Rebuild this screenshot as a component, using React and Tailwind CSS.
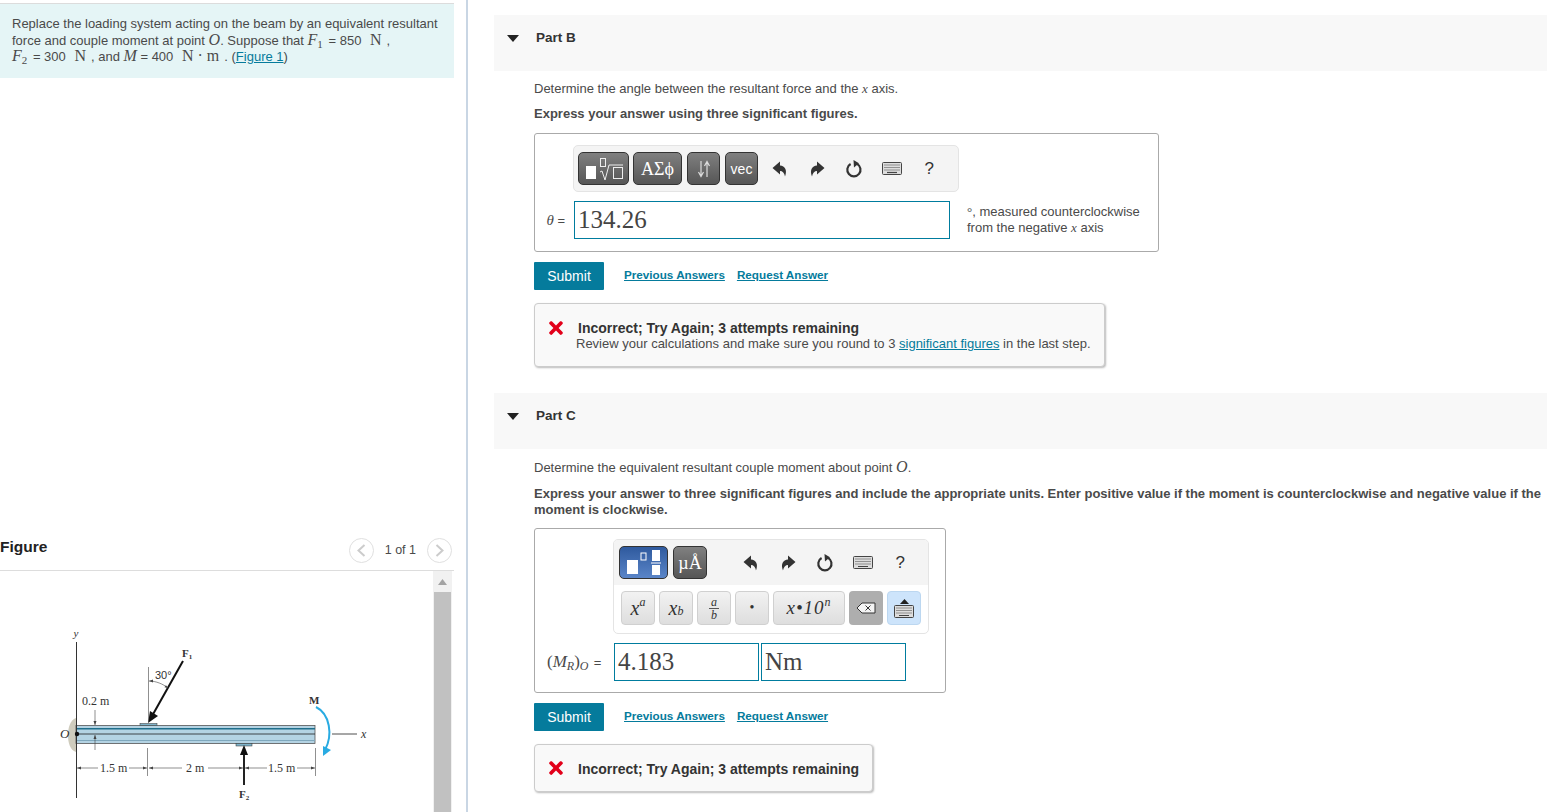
import { FaTimes } from 'react-icons/fa';

const Var = ({ children }) => <i className="font-['Liberation_Serif',serif] text-[16px] leading-none">{children}</i>;
const Unit = ({ children }) => <span className="font-['Liberation_Serif',serif] text-[16px] leading-none mx-[5px]">{children}</span>;
const Sub = ({ children }) => <sub className="font-['Liberation_Serif',serif] text-[11px] leading-none not-italic mr-[2px]">{children}</sub>;

const Undo = ({ flip }) => (
  <svg width="16" height="16" viewBox="0 0 16 16" className={flip ? 'scale-x-[-1]' : ''}>
    <path d="M0.5 7 L8 0.5 V4.5 C13 4.8 15.5 9 13 15.5 C12.5 12 10.5 10 8 10 V13.5 Z" fill="#333" />
  </svg>
);

const Refresh = () => (
  <svg width="18" height="18" viewBox="0 0 18 18">
    <path d="M12 3.9 A6.6 6.6 0 1 1 5.6 4" fill="none" stroke="#333" strokeWidth="2.2" />
    <path d="M8.5 0 L9 7.5 L14 3.2 Z" fill="#333" />
  </svg>
);

const Keyboard = () => (
  <svg width="20" height="13" viewBox="0 0 20 13">
    <rect x="0.5" y="0.5" width="19" height="12" rx="1" fill="#ddd" stroke="#444" />
    <path d="M2.5 3h15M2.5 5.5h15M2.5 8h15" stroke="#444" strokeWidth="1.2" strokeDasharray="1 1" />
    <path d="M5 10.5h10" stroke="#444" strokeWidth="1.2" />
  </svg>
);

const IconSlots = () => (
  <>
    <span className="w-[37.4px] flex justify-center"><Undo /></span>
    <span className="w-[37.4px] flex justify-center"><Undo flip /></span>
    <span className="w-[37.4px] flex justify-center"><Refresh /></span>
    <span className="w-[37.4px] flex justify-center"><Keyboard /></span>
    <span className="w-[37.4px] flex justify-center text-[17px] text-[#333]">?</span>
  </>
);

const DarkBtn = ({ className, children }) => (
  <div className={`h-[33px] flex items-center justify-center rounded-[5px] border border-[#333] bg-gradient-to-b from-[#808080] to-[#565656] text-white ${className}`}>
    {children}
  </div>
);

const KeyBtn = ({ className, children }) => (
  <div className={`h-[34px] flex items-center justify-center rounded-[4px] border border-[#d0d0d0] bg-gradient-to-b from-[#f2f2f2] to-[#dedede] font-['Liberation_Serif',serif] italic text-[#333] ${className}`}>
    {children}
  </div>
);

const AnswerInput = ({ className, children }) => (
  <div className={`h-[38px] border border-[#007c9e] pl-[3px] flex items-center font-['Liberation_Serif',serif] text-[25px] text-[#444] ${className}`}>
    {children}
  </div>
);

const PartHeader = ({ title, className }) => (
  <div className={`h-[56px] bg-[#f8f8f8] flex items-start pt-[15px] ${className}`}>
    <svg width="12" height="7" viewBox="0 0 12 7" className="ml-[13px] mt-[5px]"><path d="M0 0h12L6 7Z" fill="#222" /></svg>
    <span className="ml-[17px] text-[13.5px] font-bold text-[#333]">{title}</span>
  </div>
);

const SubmitRow = () => (
  <div className="flex items-start mt-[10px] ml-[40px]">
    <button className="w-[70px] h-[28px] bg-[#057b9c] text-white text-[14px] font-medium rounded-[1px]">Submit</button>
    <a className="ml-[20px] mt-[5px] text-[11.7px] font-bold text-[#057b9c] underline leading-4">Previous Answers</a>
    <a className="ml-[12px] mt-[5px] text-[11.7px] font-bold text-[#057b9c] underline leading-4">Request Answer</a>
  </div>
);

const Beam = () => (
  <svg viewBox="0 571 433 241" className="w-[433px] h-[241px] block shrink-0">
    <path d="M76 718 C70 720 68 728 68 735 C68 743 70 750 76 752 Z" fill="#cfccbd" />
    <rect x="76" y="725.5" width="239" height="18" fill="#b4d3e3" stroke="#555" strokeWidth="0.8" />
    <path d="M76 728.8H315" stroke="#1f6f8b" strokeWidth="1.5" />
    <path d="M76 740.5H315" stroke="#7fa8bd" strokeWidth="1" />
    <path d="M76.5 642V798" stroke="#333" strokeWidth="1" />
    <path d="M76 734H315M332 734H357" stroke="#222" strokeWidth="0.8" />
    <circle cx="77" cy="734" r="2.2" fill="#111" />
    <rect x="140" y="723.5" width="17" height="2" fill="#7fb3c9" stroke="#333" strokeWidth="0.5" />
    <rect x="236" y="743.5" width="16" height="2.5" fill="#7fb3c9" stroke="#333" strokeWidth="0.5" />
    <path d="M183 661 L152 716" stroke="#111" strokeWidth="2" />
    <path d="M148 723 L150 711 L158 716 Z" fill="#111" />
    <path d="M148.5 667V722" stroke="#444" strokeWidth="0.6" />
    <path d="M149 681 C156 681 163 684 168 688" fill="none" stroke="#444" strokeWidth="0.6" />
    <path d="M149 681l4-1.5v3ZM168 688l-3.5-.8 1.5-2Z" fill="#444" />
    <path d="M244 785V749" stroke="#222" strokeWidth="2" />
    <path d="M244 745 L240 755 H248 Z" fill="#111" />
    <path d="M316 707 C330 714 333 735 325 750" fill="none" stroke="#29abe2" strokeWidth="2" />
    <path d="M323 756 L323 746 L331 750 Z" fill="#29abe2" />
    <path d="M95 710V725M95 735V750" stroke="#444" strokeWidth="0.6" />
    <path d="M95 725l-1.5-4h3ZM95 735l-1.5 4h3Z" fill="#444" />
    <path d="M147.5 748V776M315.5 748V776" stroke="#444" strokeWidth="0.6" />
    <path d="M77 768H98M129 768H147M149 768H182M208 768H243M245 768H267M297 768H315" stroke="#444" strokeWidth="0.6" />
    <path d="M77 768l4-1.5v3ZM147 768l-4-1.5v3ZM149 768l4-1.5v3ZM243 768l-4-1.5v3ZM245 768l4-1.5v3ZM315 768l-4-1.5v3Z" fill="#444" />
    <g fontFamily="Liberation Serif, serif" fill="#333">
      <text x="76" y="637" fontSize="11" fontStyle="italic" textAnchor="middle">y</text>
      <text x="60" y="738" fontSize="13" fontStyle="italic">O</text>
      <text x="361" y="738" fontSize="12" fontStyle="italic">x</text>
      <text x="82" y="705" fontSize="12">0.2 m</text>
      <text x="100" y="772" fontSize="12">1.5 m</text>
      <text x="186" y="772" fontSize="12">2 m</text>
      <text x="268" y="772" fontSize="12">1.5 m</text>
      <text x="182" y="657" fontSize="11" fontWeight="bold">F<tspan fontSize="7" dy="2">1</tspan></text>
      <text x="239" y="798" fontSize="11" fontWeight="bold">F<tspan fontSize="7" dy="2">2</tspan></text>
      <text x="309" y="704" fontSize="11" fontWeight="bold">M</text>
    </g>
    <text x="155" y="679" fontSize="11" fontFamily="Liberation Sans, sans-serif" fill="#333">30°</text>
  </svg>
);

export default function App() {
  return (
    <div className="w-[1550px] h-[812px] overflow-hidden flex bg-white text-[#4a4a4a] font-['Liberation_Sans',Arial,sans-serif]">
      <aside className="w-[468px] shrink-0 border-r-2 border-[#c9d6e4] pt-[3px]">
        <div className="w-[454px] h-[75px] bg-[#e5f5f6] border-t border-[#dcdcdc] pl-[12px] pt-[12px] text-[13px] leading-4">
          <p className="h-4">Replace the loading system acting on the beam by an equivalent resultant</p>
          <p className="h-4">force and couple moment at point <Var>O</Var>. Suppose that <Var>F</Var><Sub>1</Sub> = 850 <Unit>N</Unit>,</p>
          <p className="h-4"><Var>F</Var><Sub>2</Sub> = 300 <Unit>N</Unit>, and <Var>M</Var> = 400 <Unit>N · m</Unit>. (<a className="text-[#057b9c] underline">Figure 1</a>)</p>
        </div>
        <div className="w-[454px] mt-[460px] h-[33px] flex items-start border-b border-[#ddd]">
          <span className="text-[15.5px] font-bold text-[#222] leading-[18px]">Figure</span>
          <div className="ml-auto mr-[2px] flex items-center text-[12.5px] gap-[11px]">
            <span className="w-[25px] h-[25px] rounded-full border border-[#e0e0e0] flex items-center justify-center">
              <svg width="9" height="13" viewBox="0 0 9 13"><path d="M7.5 1 L1.5 6.5 L7.5 12" fill="none" stroke="#ccc" strokeWidth="2" /></svg>
            </span>
            <span>1 of 1</span>
            <span className="w-[25px] h-[25px] rounded-full border border-[#e0e0e0] flex items-center justify-center">
              <svg width="9" height="13" viewBox="0 0 9 13"><path d="M1.5 1 L7.5 6.5 L1.5 12" fill="none" stroke="#ccc" strokeWidth="2" /></svg>
            </span>
          </div>
        </div>
        <div className="flex">
          <Beam />
          <div className="w-[19px] h-[241px] bg-[#f1f1f1] flex flex-col">
            <div className="h-[21px] flex items-center justify-center">
              <svg width="9" height="6" viewBox="0 0 9 6"><path d="M4.5 0L9 6H0Z" fill="#a3a3a3" /></svg>
            </div>
            <div className="flex-1 mx-[1px] bg-[#c1c1c1]" />
          </div>
        </div>
      </aside>

      <main className="ml-[26px] w-[1053px] text-[13px] leading-4 pt-[15px]">
        <PartHeader title="Part B" />
        <p className="ml-[40px] mt-[10px]">Determine the angle between the resultant force and the <i className="font-['Liberation_Serif',serif]">x</i> axis.</p>
        <p className="ml-[40px] mt-[9px] font-bold">Express your answer using three significant figures.</p>

        <div className="ml-[40px] mt-[11px] w-[625px] h-[119px] border border-[#aaa] rounded-[3px] pt-[11px]">
          <div className="ml-[38px] w-[386px] h-[47px] bg-[#f4f4f4] border border-[#e4e4e4] rounded-[5px] flex items-center pl-[4px]">
            <DarkBtn className="w-[51px]">
              <svg width="49" height="31" viewBox="0 0 49 31">
                <rect x="7" y="13" width="10" height="13" fill="#fff" />
                <rect x="21.5" y="5.5" width="5" height="8" fill="none" stroke="#eee" />
                <path d="M21 19l2-1 3 9 4-15h14" fill="none" stroke="#eee" />
                <rect x="34.5" y="14.5" width="9" height="11" fill="none" stroke="#eee" />
              </svg>
            </DarkBtn>
            <DarkBtn className="w-[49px] ml-[4px] font-['Liberation_Serif',serif] text-[18px]">ΑΣϕ</DarkBtn>
            <DarkBtn className="w-[33px] ml-[5px]">
              <svg width="14" height="18" viewBox="0 0 14 18">
                <path d="M4 1V15M1.5 12L4 16.5 6.5 12M10 17V3M7.5 6L10 1.5 12.5 6" fill="none" stroke="#ddd" strokeWidth="1.2" />
              </svg>
            </DarkBtn>
            <DarkBtn className="w-[33px] ml-[5px] text-[14px]">vec</DarkBtn>
            <div className="ml-[3px] flex items-center"><IconSlots /></div>
          </div>
          <div className="flex items-center mt-[9px]">
            <span className="w-[39px] text-right pr-[9px] whitespace-nowrap"><i className="font-['Liberation_Serif',serif] text-[15px]">θ</i> =</span>
            <AnswerInput className="w-[376px]">134.26</AnswerInput>
            <p className="ml-[17px]"><span className="font-['Liberation_Serif',serif]">°</span>, measured counterclockwise<br />from the negative <i className="font-['Liberation_Serif',serif]">x</i> axis</p>
          </div>
        </div>

        <SubmitRow />

        <div className="ml-[40px] mt-[13px] w-[571px] h-[64px] bg-[#f9f9f9] border border-[#ccc] rounded-[4px] shadow-[1px_1px_2px_#bbb] pl-[13px] pt-[16px]">
          <div className="flex items-center h-4">
            <span className="w-[16px] flex justify-center"><FaTimes className="text-[#e2001a] text-[20px]" /></span>
            <span className="ml-[14px] text-[14px] font-bold text-[#333]">Incorrect; Try Again; 3 attempts remaining</span>
          </div>
          <p className="ml-[28px]">Review your calculations and make sure you round to 3 <a className="text-[#057b9c] underline">significant figures</a> in the last step.</p>
        </div>

        <PartHeader title="Part C" className="mt-[26px]" />
        <p className="ml-[40px] mt-[10px]">Determine the equivalent resultant couple moment about point <Var>O</Var>.</p>
        <p className="ml-[40px] mt-[10px] font-bold w-[1010px]">Express your answer to three significant figures and include the appropriate units. Enter positive value if the moment is counterclockwise and negative value if the moment is clockwise.</p>

        <div className="ml-[40px] mt-[10px] w-[412px] h-[165px] border border-[#aaa] rounded-[3px] pt-[10px]">
          <div className="ml-[78px] w-[316px] h-[95px] border border-[#e4e4e4] rounded-[5px] overflow-hidden">
            <div className="h-[45px] bg-[#f4f4f4] flex items-center pl-[5px]">
              <div className="w-[49px] h-[33px] flex items-center justify-center rounded-[5px] border border-[#333] bg-gradient-to-b from-[#2f5a9e] to-[#5a85c8]">
                <svg width="38" height="28" viewBox="0 0 38 28">
                  <rect x="2" y="11" width="11" height="14" fill="#fff" />
                  <rect x="16" y="4" width="5" height="7" fill="none" stroke="#fff" />
                  <rect x="27" y="1" width="8" height="11" fill="#fff" />
                  <path d="M26 14h10" stroke="#fff" />
                  <rect x="27" y="16" width="8" height="10" fill="#fff" />
                </svg>
              </div>
              <DarkBtn className="w-[34px] ml-[5px] font-['Liberation_Serif',serif] text-[18px]">µÅ</DarkBtn>
              <div className="ml-[25px] flex items-center"><IconSlots /></div>
            </div>
            <div className="flex items-center pl-[7px] pt-[6px] gap-[4px] bg-white">
              <KeyBtn className="w-[34px] text-[20px]">x<sup className="text-[12px]">a</sup></KeyBtn>
              <KeyBtn className="w-[34px] text-[20px]">x<sub className="text-[12px]">b</sub></KeyBtn>
              <KeyBtn className="w-[34px] flex-col text-[12px] leading-[12px]">
                <span className="border-b border-[#555] px-[2px]">a</span>
                <span>b</span>
              </KeyBtn>
              <KeyBtn className="w-[34px] text-[14px] not-italic">•</KeyBtn>
              <KeyBtn className="w-[72px] text-[19px] tracking-[1px]">x•10<sup className="text-[12px]">n</sup></KeyBtn>
              <div className="w-[34px] h-[34px] rounded-[4px] bg-[#aeaeae] flex items-center justify-center">
                <svg width="20" height="12" viewBox="0 0 20 12">
                  <path d="M6 1H19V11H6L1 6Z" fill="#f4f4f4" stroke="#333" />
                  <path d="M9.5 3.5l5 5M14.5 3.5l-5 5" stroke="#333" />
                </svg>
              </div>
              <div className="w-[34px] h-[34px] rounded-[4px] bg-[#cde4fb] border border-[#bcd7f0] flex flex-col items-center justify-center gap-[1px]">
                <svg width="9" height="5" viewBox="0 0 9 5"><path d="M4.5 0L9 5H0Z" fill="#222" /></svg>
                <Keyboard />
              </div>
            </div>
          </div>
          <div className="flex items-center mt-[9px]">
            <span className="w-[79px] pl-[12px] whitespace-nowrap font-['Liberation_Serif',serif] text-[17px]">(<i>M<sub className="text-[12px]">R</sub></i>)<i><sub className="text-[12px]">O</sub></i> <span className="font-['Liberation_Sans',sans-serif] text-[13px] ml-[1px]">=</span></span>
            <AnswerInput className="w-[145px]">4.183</AnswerInput>
            <AnswerInput className="w-[145px] ml-[2px]">Nm</AnswerInput>
          </div>
        </div>

        <SubmitRow />

        <div className="ml-[40px] mt-[13px] w-[339px] h-[48px] bg-[#f9f9f9] border border-[#ccc] rounded-[4px] shadow-[1px_1px_2px_#bbb] pl-[13px] flex items-center">
          <span className="w-[16px] flex justify-center"><FaTimes className="text-[#e2001a] text-[20px]" /></span>
          <span className="ml-[14px] pt-[1px] text-[14px] font-bold text-[#333]">Incorrect; Try Again; 3 attempts remaining</span>
        </div>
      </main>
    </div>
  );
}
